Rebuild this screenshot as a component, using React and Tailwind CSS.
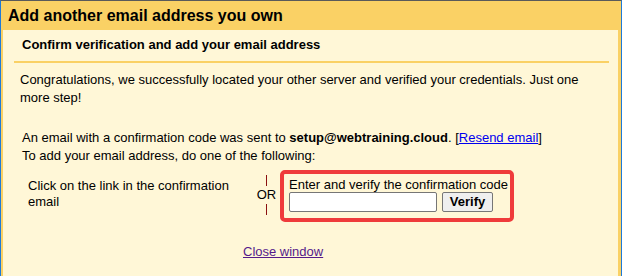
export default function App() {
  return (
    <div className="w-[622px] h-[276px] overflow-hidden flex flex-col bg-[#fad165] border-t border-t-[#5a5a5a] border-l border-r border-l-[#1f7ad8] border-r-[#1f7ad8] text-black font-['Liberation_Sans',Arial,sans-serif]">
      <div className="h-[29px] shrink-0 flex items-center pl-[7px] text-[16px] leading-[18px] font-bold">
        Add another email address you own
      </div>
      <div className="flex-1 bg-[#fff7d7] ml-[2px] mr-[3px] pl-[11px] pr-[9px] text-[13px]">
        <div className="pt-[7px] pl-[8px] font-bold leading-[16px]">
          Confirm verification and add your email address
        </div>
        <div className="mt-[8px] h-[2px] bg-[#fad165]" />
        <p className="mt-[8px] pl-[6px] w-[566px] leading-[18px]">
          Congratulations, we successfully located your other server and verified your credentials. Just one more step!
        </p>
        <div className="mt-[22px] pl-[8px] leading-[18px]">
          <div>
            An email with a confirmation code was sent to <b>setup@webtraining.cloud</b>. [
            <a href="#" className="text-[#0000ee] underline">Resend email</a>]
          </div>
          <div>To add your email address, do one of the following:</div>
        </div>
        <div className="mt-[5px] flex items-center">
          <div className="w-[239px] pl-[14px] pb-[4px] leading-[16px]">
            Click on the link in the confirmation email
          </div>
          <div className="w-[27px] flex flex-col items-center pb-[3px]">
            <div className="w-px h-[11px] bg-[#8b1010]" />
            <div className="leading-[18px]">OR</div>
            <div className="w-px h-[11px] bg-[#8b1010]" />
          </div>
          <div className="w-[234px] h-[52px] border-4 border-[#ef3b3b] rounded-[5px] pl-[5px] pt-[3px]">
            <div className="leading-[15px] whitespace-nowrap">Enter and verify the confirmation code</div>
            <div className="flex items-center gap-[5px]">
              <input type="text" className="w-[148px] h-[20px] bg-white border border-[#767676] rounded-[2px] outline-none" />
              <button className="w-[51px] h-[20px] bg-[#efefef] border border-[#767676] rounded-[2px] font-bold text-[13px] leading-[16px]">
                Verify
              </button>
            </div>
          </div>
        </div>
        <div className="mt-[22px] pl-[229px] leading-[16px]">
          <a href="#" className="text-[#551a8b] underline">Close window</a>
        </div>
      </div>
    </div>
  );
}
